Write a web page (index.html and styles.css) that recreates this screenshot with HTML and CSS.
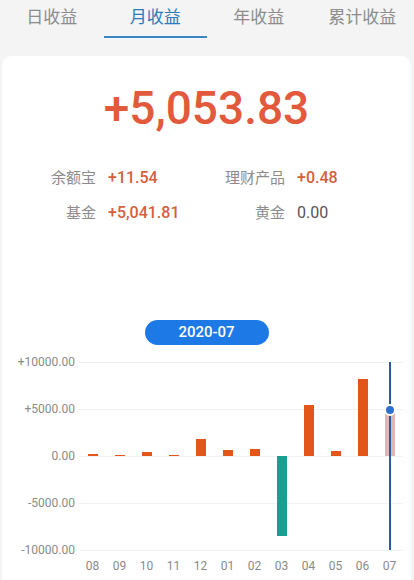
FILE: index.html
```html
<!DOCTYPE html>
<html lang="zh-CN">
<head>
<meta charset="UTF-8">
<meta name="viewport" content="width=device-width, initial-scale=1.0">
<title>收益</title>
<link rel="stylesheet" href="styles.css">
</head>
<body>
<div class="tabs">
    <div class="tab">日收益</div>
    <div class="tab active">月收益</div>
    <div class="tab">年收益</div>
    <div class="tab">累计收益</div>
</div>

<div class="card">
    <div class="total">+5,053.83</div>

    <div class="details">
        <span class="label">余额宝</span><span class="value">+11.54</span>
        <span class="label">理财产品</span><span class="value">+0.48</span>
        <span class="label">基金</span><span class="value">+5,041.81</span>
        <span class="label">黄金</span><span class="value zero">0.00</span>
    </div>

    <div class="pill">2020-07</div>

    <div class="chart">
        <div class="y-axis">
            <span>+10000.00</span>
            <span>+5000.00</span>
            <span>0.00</span>
            <span>-5000.00</span>
            <span>-10000.00</span>
        </div>
        <div class="plot-wrap">
            <div class="plot">
                <div class="col"><div class="up"><div class="bar" style="height:2px"></div></div><div class="down"></div></div>
                <div class="col"><div class="up"><div class="bar" style="height:1px"></div></div><div class="down"></div></div>
                <div class="col"><div class="up"><div class="bar" style="height:4px"></div></div><div class="down"></div></div>
                <div class="col"><div class="up"><div class="bar" style="height:1.5px"></div></div><div class="down"></div></div>
                <div class="col"><div class="up"><div class="bar" style="height:17px"></div></div><div class="down"></div></div>
                <div class="col"><div class="up"><div class="bar" style="height:6px"></div></div><div class="down"></div></div>
                <div class="col"><div class="up"><div class="bar" style="height:7px"></div></div><div class="down"></div></div>
                <div class="col"><div class="up"></div><div class="down"><div class="bar neg" style="height:80px"></div></div></div>
                <div class="col"><div class="up"><div class="bar" style="height:51px"></div></div><div class="down"></div></div>
                <div class="col"><div class="up"><div class="bar" style="height:5px"></div></div><div class="down"></div></div>
                <div class="col"><div class="up"><div class="bar" style="height:77px"></div></div><div class="down"></div></div>
                <div class="col"><div class="up"><div class="bar current" style="height:43px"></div></div><div class="down"></div></div>
                <div class="cursor"><span class="dot"></span></div>
            </div>
            <div class="x-axis">
                <span>08</span><span>09</span><span>10</span><span>11</span>
                <span>12</span><span>01</span><span>02</span><span>03</span>
                <span>04</span><span>05</span><span>06</span><span>07</span>
            </div>
        </div>
    </div>
</div>
</body>
</html>
```

FILE: styles.css
```css
body {
    margin: 0;
    background-color: #f4f4f4;
    font-family: Roboto, "Noto Sans CJK SC", sans-serif;
    overflow: hidden;
}

.tabs {
    display: grid;
    grid-template-columns: repeat(4, 1fr);
    margin-bottom: 18px;
}

.tab {
    height: 38px;
    box-sizing: border-box;
    line-height: 34px;
    text-align: center;
    font-size: 17px;
    color: #8c8c8c;
}

.tab.active {
    color: #2b7bbf;
    border-bottom: 2px solid #3a86c4;
}

.card {
    margin: 0 3px 0 2px;
    min-height: 524px;
    background-color: #fff;
    border-radius: 10px 10px 0 0;
    padding-top: 26px;
    box-sizing: border-box;
}

.total {
    text-align: center;
    font-size: 46px;
    line-height: 52px;
    font-weight: 500;
    color: #e25a3b;
}

.details {
    display: grid;
    grid-template-columns: 94px 85px 80px 1fr;
    column-gap: 12px;
    row-gap: 13px;
    margin-top: 33px;
    font-size: 15px;
    line-height: 22px;
}

.label {
    text-align: right;
    color: #8c8c8c;
}

.value {
    color: #d4603c;
    font-weight: 500;
    font-size: 16px;
}

.value.zero {
    color: #555;
    font-weight: 400;
}

.pill {
    width: 124px;
    height: 25px;
    margin: 96px auto 0;
    border-radius: 13px;
    background-color: #1d79e6;
    color: #fff;
    text-align: center;
    line-height: 25px;
    font-size: 15px;
    font-weight: 500;
}

.chart {
    display: flex;
    gap: 4px;
    margin-top: 10px;
}

.y-axis {
    width: 73px;
    height: 202px;
    display: flex;
    flex-direction: column;
    justify-content: space-between;
    align-items: flex-end;
    font-size: 12px;
    line-height: 14px;
    color: #8a8a8a;
}

.plot-wrap {
    padding-top: 7px;
}

.plot {
    position: relative;
    display: grid;
    grid-template-columns: repeat(12, 27px);
    height: 189px;
    background-image: repeating-linear-gradient(to bottom, #f1f1f1 0 1px, transparent 1px 47px);
}

.col {
    display: flex;
    flex-direction: column;
    align-items: center;
}

.up,
.down {
    height: 94px;
    display: flex;
    flex-direction: column;
}

.up {
    justify-content: flex-end;
}

.down {
    justify-content: flex-start;
}

.bar {
    width: 10px;
    background-color: #e2561a;
}

.bar.neg {
    background-color: #16a08f;
}

.bar.current {
    background-color: #e3b4b4;
}

.cursor {
    position: absolute;
    left: 310px;
    top: 0;
    width: 1.5px;
    height: 188px;
    background-color: #2d5b96;
}

.dot {
    position: absolute;
    left: -5px;
    top: 42px;
    width: 8px;
    height: 8px;
    border-radius: 50%;
    border: 2px solid #fff;
    background-color: #2f6fcf;
}

.x-axis {
    display: grid;
    grid-template-columns: repeat(12, 27px);
    margin-top: 8px;
    font-size: 12px;
    line-height: 14px;
    text-align: center;
    color: #8a8a8a;
}
```
